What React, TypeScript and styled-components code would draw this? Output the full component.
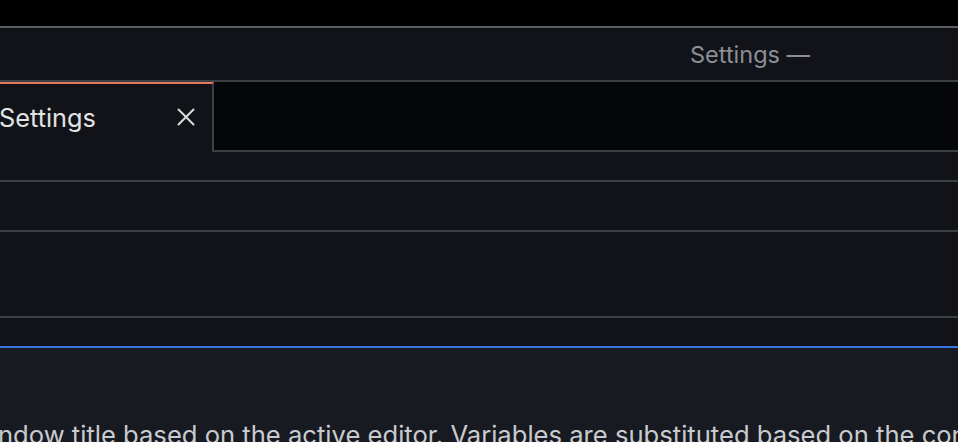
import React from "react";
import styled, { createGlobalStyle } from "styled-components";

const Global = createGlobalStyle`
  html, body { margin: 0; padding: 0; background: #000; }
  body { font-family: Inter, "Noto Sans", "Liberation Sans", sans-serif; -webkit-font-smoothing: antialiased; }
  #root { width: 958px; height: 442px; overflow: hidden; }
`;

const Page = styled.div`
  display: flex;
  flex-direction: column;
  width: 958px;
  height: 442px;
  overflow: hidden;
  background: #000;
`;

const TopStrip = styled.div`
  height: 26px;
  flex: none;
  background: #000;
  border-bottom: 2px solid #5a5d61;
`;

const TitleBar = styled.div`
  height: 52px;
  flex: none;
  display: flex;
  align-items: center;
  padding-left: 690px;
  background: #111318;
  border-bottom: 2px solid #3b3e43;
  color: #8c8f95;
  font-size: 23.5px;
  white-space: nowrap;
`;

const TabBar = styled.div`
  height: 68px;
  flex: none;
  display: flex;
  background: #05060a;
  border-bottom: 2px solid #3b3e43;
`;

const Tab = styled.div`
  width: 214px;
  flex: none;
  display: flex;
  align-items: center;
  justify-content: space-between;
  box-sizing: border-box;
  padding: 0 16px 0 0;
  background: #111318;
  border-top: 2px solid #e0795f;
  border-right: 2px solid #3b3e43;
  margin-bottom: -2px;
  height: 70px;
  color: #e2e3e5;
  font-size: 25.3px;
`;

const TabLabel = styled.span`
  margin-left: -1px;
  margin-top: -2px;
`;

const CloseButton = styled.span`
  display: flex;
  align-items: center;
  justify-content: center;
  width: 20px;
  height: 20px;
  margin-top: -2px;
`;

const Band = styled.div<{ $h: number; $line?: string }>`
  height: ${(p) => p.$h}px;
  flex: none;
  background: #111318;
  border-bottom: 2px solid ${(p) => p.$line ?? "#3b3e43"};
`;

const Content = styled.div`
  flex: 1;
  background: #171a21;
  display: flex;
  align-items: flex-end;
  overflow: hidden;
`;

const Description = styled.p`
  margin: 0 0 -8px -2px;
  white-space: nowrap;
  font-size: 25.6px;
  color: #c9cbcf;
  line-height: 30px;
`;

export default function App() {
  return (
    <>
      <Global />
      <Page>
        <TopStrip />
        <TitleBar>Settings —</TitleBar>
        <TabBar>
          <Tab>
            <TabLabel>Settings</TabLabel>
            <CloseButton>
              <svg width="18" height="18" viewBox="0 0 18 18" fill="none">
                <path d="M1.5 1.5 L16.5 16.5 M16.5 1.5 L1.5 16.5" stroke="#d9dadc" strokeWidth="2" strokeLinecap="round" />
              </svg>
            </CloseButton>
          </Tab>
        </TabBar>
        <Band $h={28} />
        <Band $h={48} />
        <Band $h={84} />
        <Band $h={28} $line="#3a73dc" />
        <Content>
          <Description>
            ndow title based on the active editor. Variables are substituted based on the context:
          </Description>
        </Content>
      </Page>
    </>
  );
}
